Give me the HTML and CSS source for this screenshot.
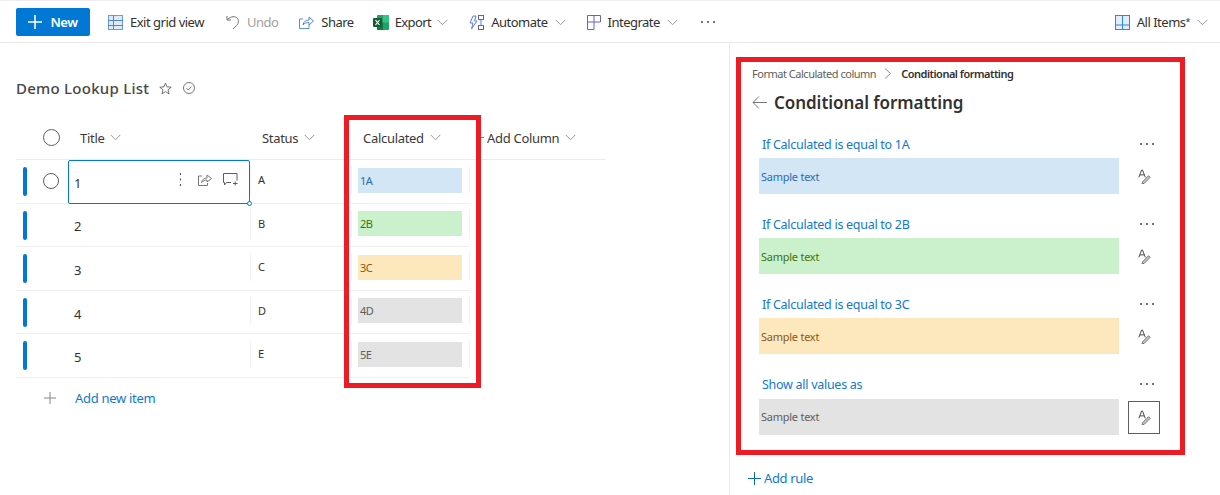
FILE: index.html
```html
<!DOCTYPE html>
<html lang="en">
<head>
<meta charset="utf-8">
<title>Demo Lookup List</title>
<link rel="stylesheet" href="styles.css">
</head>
<body>
<svg class="sprite" width="0" height="0" aria-hidden="true">
  <symbol id="chev" viewBox="0 0 12 8"><path d="M.5 1 6 6.500 11.500 1" fill="none" stroke="currentColor"/></symbol>
  <symbol id="fmt" viewBox="0 0 16 18"><path d="M1 10 4.500 1h1L9 10M2.500 7h5" fill="none" stroke="#484644" stroke-width="1.200"/><path d="M5.500 15.500 13 8l2 2-7.500 7.500-2.500.5z" fill="#c8c6c4" stroke="#605e5c"/></symbol>
</svg>
<div class="app">
  <header class="cmdbar">
    <button class="new-btn"><svg width="14" height="14" viewBox="0 0 14 14"><path d="M7 0v14M0 7h14" stroke="#fff" stroke-width="1.500"/></svg>New</button>
    <div class="cmd first">
      <svg width="15" height="15" viewBox="0 0 15 15"><rect x=".5" y=".5" width="14" height="14" fill="#dfeaf8" stroke="#6a9ce0"/><path d="M5.500 0v15M0 5.500h15M0 10.500h15" stroke="#4f86d8"/></svg>
      <span>Exit grid view</span>
    </div>
    <div class="cmd muted">
      <svg width="14" height="15" viewBox="0 0 14 15"><path d="M1 1v4h4M1.500 4.500C5 1 9.500 1 11.500 3.500c2 2.800.5 6-1.500 7.500l-3 3" fill="none" stroke="#6f6e6c"/></svg>
      <span>Undo</span>
    </div>
    <div class="cmd share">
      <svg width="15" height="14" viewBox="0 0 15 14"><path d="M4 4H.5v9.500h9.500V10" fill="none" stroke="#5b8fdc"/><path d="M4 10c.5-3.500 3-5 6-5V2l4.500 4-4.500 4V7.500C7.500 7.500 5.500 8 4 10z" fill="none" stroke="#4f86d8"/></svg>
      <span>Share</span>
    </div>
    <div class="cmd export">
      <svg width="16" height="15" viewBox="0 0 16 15"><rect x="4" y="0" width="12" height="15" rx="1" fill="#21a366"/><rect x="10" y="0" width="6" height="7.500" fill="#33c481"/><rect x="4" y="7.500" width="6" height="7.500" fill="#107c41"/><rect x="0" y="3" width="9" height="9" rx="1" fill="#185c37"/><path d="M2.500 5l4 5M6.500 5l-4 5" stroke="#fff" stroke-width="1.200"/></svg>
      <span>Export</span>
      <svg class="chev"><use href="#chev"/></svg>
    </div>
    <div class="cmd">
      <svg width="15" height="15" viewBox="0 0 15 15"><path d="M4 1 1 8h3l-1.500 6L8 6H5.500L7 1z" fill="none" stroke="#5b7fdc"/><rect x="9.500" y=".5" width="5" height="4" fill="none" stroke="#6264a7"/><rect x="9.500" y="10.500" width="5" height="4" fill="none" stroke="#6264a7"/><path d="M12 4.500v6" stroke="#4f86d8"/></svg>
      <span>Automate</span>
      <svg class="chev"><use href="#chev"/></svg>
    </div>
    <div class="cmd">
      <svg width="14" height="15" viewBox="0 0 14 15"><path d="M7 .5h6.500v6.500H.5v7.500H7V.5H.5V7" fill="none" stroke="#6264c7"/></svg>
      <span>Integrate</span>
      <svg class="chev"><use href="#chev"/></svg>
    </div>
    <div class="dots cmd-dots"><i></i><i></i><i></i></div>
    <div class="cmd view">
      <svg width="15" height="15" viewBox="0 0 15 15"><rect x=".5" y=".5" width="14" height="14" fill="#e3eefa" stroke="#2f86dc"/><path d="M7.500 0v15M0 10h15" stroke="#2f86dc"/></svg>
      <span>All Items<small>*</small></span>
      <svg class="chev"><use href="#chev"/></svg>
    </div>
  </header>

  <div class="body">
    <main class="list">
      <div class="list-title">
        <h1>Demo Lookup List</h1>
        <svg width="13" height="13" viewBox="0 0 15 15"><path d="M7.500 1.200 9.300 5.600l4.800.4-3.700 3 1.200 4.700-4.100-2.600-4.100 2.600L4.600 9 .9 6l4.800-.4z" fill="none" stroke="#605e5c"/></svg>
        <svg width="12" height="12" viewBox="0 0 12 12"><circle cx="6" cy="6" r="5.500" fill="none" stroke="#7a7876"/><path d="M3.500 6.200 5.300 8l3.200-3.500" fill="none" stroke="#7a7876"/></svg>
      </div>
      <div class="head">
        <span class="check-wrap"><span class="radio big"></span></span>
        <div class="hcell title-h"><span>Title</span><svg class="chev"><use href="#chev"/></svg></div>
        <div class="hcell status-h"><span>Status</span><svg class="chev"><use href="#chev"/></svg></div>
        <div class="hcell calc-h"><span>Calculated</span><svg class="chev"><use href="#chev"/></svg></div>
        <div class="hcell add-h"><svg class="add-plus" width="5" height="7" viewBox="0 0 5 7"><path d="M0 3.500h5" stroke="#8a8886"/></svg><span>Add Column</span><svg class="chev"><use href="#chev"/></svg></div>
      </div>
      <div class="row">
        <span class="check-wrap"><b class="bar"></b><span class="radio"></span></span>
        <div class="tcell selected">
          <span>1</span>
          <div class="row-actions">
            <svg width="3" height="13" viewBox="0 0 3 13"><path d="M1.500 0v2M1.500 5.500v2M1.500 11v2" stroke="#605e5c" stroke-width="1.200"/></svg>
            <svg width="14" height="13" viewBox="0 0 14 13"><path d="M4 3H.5v9.500h9V10" fill="none" stroke="#7a7876"/><path d="M3.500 9.500C4 6.500 6.500 5 9 5V2l4.500 3.500L9 9V7C7 7 5 8 3.500 9.500z" fill="none" stroke="#7a7876"/></svg>
            <svg width="15" height="13" viewBox="0 0 15 13"><path d="M8 9.500H3.500l-2 2.500V9.500H.5V.5h13.500v7" fill="none" stroke="#605e5c"/><path d="M10 10.500h4.500M12.200 8.500v4" stroke="#605e5c"/></svg>
          </div>
          <i class="handle"></i>
        </div>
        <div class="scell">A</div>
        <div class="ccell"><span class="pill blue">1A</span></div>
      </div>
      <div class="row">
        <span class="check-wrap"><b class="bar"></b></span>
        <div class="tcell"><span>2</span></div>
        <div class="scell">B</div>
        <div class="ccell"><span class="pill green">2B</span></div>
      </div>
      <div class="row">
        <span class="check-wrap"><b class="bar"></b></span>
        <div class="tcell"><span>3</span></div>
        <div class="scell">C</div>
        <div class="ccell"><span class="pill orange">3C</span></div>
      </div>
      <div class="row">
        <span class="check-wrap"><b class="bar"></b></span>
        <div class="tcell"><span>4</span></div>
        <div class="scell">D</div>
        <div class="ccell"><span class="pill gray">4D</span></div>
      </div>
      <div class="row">
        <span class="check-wrap"><b class="bar"></b></span>
        <div class="tcell"><span>5</span></div>
        <div class="scell">E</div>
        <div class="ccell"><span class="pill gray">5E</span></div>
      </div>
      <div class="add-item">
        <svg width="12" height="12" viewBox="0 0 12 12"><path d="M6 0v12M0 6h12" stroke="#8a8886"/></svg>
        <span>Add new item</span>
      </div>
    </main>

    <aside class="panel">
      <nav class="crumbs">
        <span class="crumb">Format Calculated column</span>
        <svg width="8" height="11" viewBox="0 0 8 11"><path d="M1 .5 6.500 5.500 1 10.500" fill="none" stroke="#8a8886"/></svg>
        <span class="crumb current">Conditional formatting</span>
      </nav>
      <div class="panel-title">
        <svg width="15" height="13" viewBox="0 0 15 13"><path d="M7 .5 1 6.500l6 6M1 6.500h14" fill="none" stroke="#7a7876"/></svg>
        <h2>Conditional formatting</h2>
      </div>
      <section class="rule">
        <div class="rule-head"><a>If Calculated is equal to 1A</a><div class="dots"><i></i><i></i><i></i></div></div>
        <div class="rule-body"><div class="swatch blue">Sample text</div><span class="fmt-btn"><svg width="13" height="15"><use href="#fmt"/></svg></span></div>
      </section>
      <section class="rule">
        <div class="rule-head"><a>If Calculated is equal to 2B</a><div class="dots"><i></i><i></i><i></i></div></div>
        <div class="rule-body"><div class="swatch green">Sample text</div><span class="fmt-btn"><svg width="13" height="15"><use href="#fmt"/></svg></span></div>
      </section>
      <section class="rule">
        <div class="rule-head"><a>If Calculated is equal to 3C</a><div class="dots"><i></i><i></i><i></i></div></div>
        <div class="rule-body"><div class="swatch orange">Sample text</div><span class="fmt-btn"><svg width="13" height="15"><use href="#fmt"/></svg></span></div>
      </section>
      <section class="rule last">
        <div class="rule-head"><a>Show all values as</a><div class="dots"><i></i><i></i><i></i></div></div>
        <div class="rule-body"><div class="swatch gray">Sample text</div><span class="fmt-btn boxed"><svg width="13" height="15"><use href="#fmt"/></svg></span></div>
      </section>
      <div class="add-rule">
        <svg width="13" height="13" viewBox="0 0 13 13"><path d="M6.500 0v13M0 6.500h13" stroke="#0f6cbd"/></svg>
        <span>Add rule</span>
      </div>
    </aside>
  </div>
  <div class="mark mark-col"></div>
  <div class="mark mark-panel"></div>
</div>
</body>
</html>
```
FILE: styles.css
```css
* { box-sizing: border-box; }
html, body { margin: 0; padding: 0; }
body {
  width: 1220px;
  height: 495px;
  overflow: hidden;
  background: #fff;
  color: #323130;
  font-family: "Noto Sans", "Open Sans", sans-serif;
  font-size: 13px;
  letter-spacing: -0.45px;
}
.sprite { position: absolute; }
svg { display: block; flex: none; }
.chev { width: 11px; height: 7px; color: #8a8886; }
.app { position: relative; width: 1220px; height: 495px; display: flex; flex-direction: column; }

/* command bar */
.cmdbar {
  height: 43px;
  flex: none;
  display: flex;
  align-items: center;
  gap: 21px;
  padding: 1px 12px 0 16px;
  border-top: 1px solid #eee;
  border-bottom: 1px solid #eaeaea;
}
.new-btn {
  width: 74px;
  height: 28px;
  border: 0;
  border-radius: 2px;
  background: #0078d4;
  color: #fff;
  font: 600 13px "Noto Sans", sans-serif;
  letter-spacing: -0.45px;
  display: flex;
  align-items: center;
  justify-content: center;
  gap: 8px;
  padding: 0;
}
.cmd { display: flex; align-items: center; gap: 7px; white-space: nowrap; letter-spacing: -0.5px; }
.cmd.first { margin-left: -3px; }
.cmd.muted { margin-left: 1px; }
.cmd.muted span { color: #a19f9d; }
.cmd.share { margin-right: -2px; }
.cmd.export { gap: 6px; }
.cmd.export span { margin-right: 0; letter-spacing: -0.6px; }
.cmd-dots { margin: 0 0 0 2px; }
.view { margin-left: auto; }
.view small { font-size: 9px; vertical-align: 2px; }
.dots { display: flex; gap: 4px; }
.dots i { width: 2px; height: 2px; background: #7a7876; display: block; }

.body { flex: 1; display: flex; min-height: 0; }

/* list */
.list { width: 729px; flex: none; padding: 34px 0 0 16px; }
.list-title { display: flex; align-items: center; height: 22px; }
.list-title h1 { margin: 0 10px 0 0; font-size: 15px; font-weight: 500; letter-spacing: 0.25px; color: #484644; }
.list-title svg + svg { margin-left: 11px; }
.head {
  width: 590px;
  height: 43px;
  margin-top: 18px;
  padding-bottom: 1px;
  display: grid;
  grid-template-columns: 52px 194px 101px 120px 1fr;
  align-items: center;
  border-bottom: 1px solid #edebe9;
}
.hcell { display: flex; align-items: center; gap: 6px; color: #3b3a39; letter-spacing: -0.3px; }
.title-h { padding-left: 12px; }
.add-h { margin-left: -4px; gap: 0; }
.add-h span { margin: 0 6px 0 3px; }
.check-wrap { position: relative; display: flex; align-items: center; height: 100%; padding-left: 27px; }
.radio { display: block; width: 16px; height: 16px; border: 1px solid #605e5c; border-radius: 50%; }
.radio.big { width: 17px; height: 17px; }
.bar { position: absolute; left: 7px; top: 7px; width: 4px; height: 29px; border-radius: 2px; background: #0078d4; }

.row {
  width: 454px;
  height: 43.6px;
  display: grid;
  grid-template-columns: 52px 182px 101px 119px;
  border-bottom: 1px solid #f0efee;
}
.tcell { position: relative; display: flex; align-items: center; padding: 3px 0 0 6px; color: #323130; }
.tcell.selected { border: 1px solid #0078d4; border-radius: 2px; padding-left: 5px; margin-bottom: -1px; }
.row-actions { margin-left: auto; margin-right: 11px; margin-top: -7px; display: flex; align-items: center; gap: 16px; }
.row-actions svg + svg + svg { margin-left: -5px; }
.handle { position: absolute; right: -3px; bottom: -3px; width: 5px; height: 5px; border: 1px solid #0078d4; border-radius: 50%; background: #fff; }
.scell { display: flex; align-items: center; padding: 0 0 1px 7px; font-size: 11px; margin: 6px 0; border-left: 1px solid #f3f2f1; height: 28px; color: #323130; }
.ccell { display: flex; align-items: center; padding-left: 6px; margin: 6px 0; height: 28px; border-left: 1px solid #f3f2f1; border-right: 1px solid #f3f2f1; }
.pill { display: flex; align-items: center; width: 104px; height: 25px; padding-left: 2px; font-size: 11px; }
.blue { background: #d3e6f6; color: #2b6cb0; }
.green { background: #caf0cc; color: #437406; }
.orange { background: #fde7bd; color: #8a5a16; }
.gray { background: #e3e3e3; color: #605e5c; }
.add-item { display: flex; align-items: center; height: 40px; padding-left: 28px; gap: 19px; color: #0f78d4; letter-spacing: -0.3px; }

/* panel */
.panel { flex: 1; border-left: 1px solid #eaeaea; padding: 21px 0 0 22px; }
.crumbs { display: flex; align-items: center; height: 18px; font-size: 11px; gap: 8px; color: #605e5c; letter-spacing: -0.48px; }
.crumb.current { color: #323130; font-weight: 600; margin-left: 1px; letter-spacing: -0.5px; }
.panel-title { display: flex; align-items: center; gap: 7px; height: 30px; margin-top: 5px; margin-bottom: 19px; }
.panel-title h2 { margin: 0; font-size: 17px; font-weight: 600; letter-spacing: -0.05px; color: #323130; }
.rule { width: 410px; margin-left: 7px; height: 80px; }
.rule-head { display: flex; align-items: center; justify-content: space-between; height: 22px; padding: 0 15px 6px 3px; }
.rule-head a { color: #0f78d4; font-size: 12.500px; letter-spacing: -0.28px; }
.rule-body { display: flex; align-items: center; gap: 9px; }
.rule.last .rule-body { margin-top: 1px; }
.rule.last .swatch { padding-bottom: 1px; }
.swatch { width: 360px; height: 36px; display: flex; align-items: center; padding-left: 2px; font-size: 11px; letter-spacing: -0.25px; }
.fmt-btn { width: 32px; height: 33px; display: flex; align-items: center; justify-content: center; border: 1px solid transparent; }
.fmt-btn.boxed { border-color: #605e5c; }
.add-rule { display: flex; align-items: center; gap: 3px; margin: 11px 0 0 -4px; height: 22px; color: #0f78d4; letter-spacing: -0.35px; }

/* red annotation boxes drawn over the screenshot */
.mark { position: absolute; border: 5px solid #ed1c24; pointer-events: none; }
.mark-col { left: 344px; top: 115px; width: 137px; height: 273px; }
.mark-panel { left: 736px; top: 57px; width: 449px; height: 398px; }
```
